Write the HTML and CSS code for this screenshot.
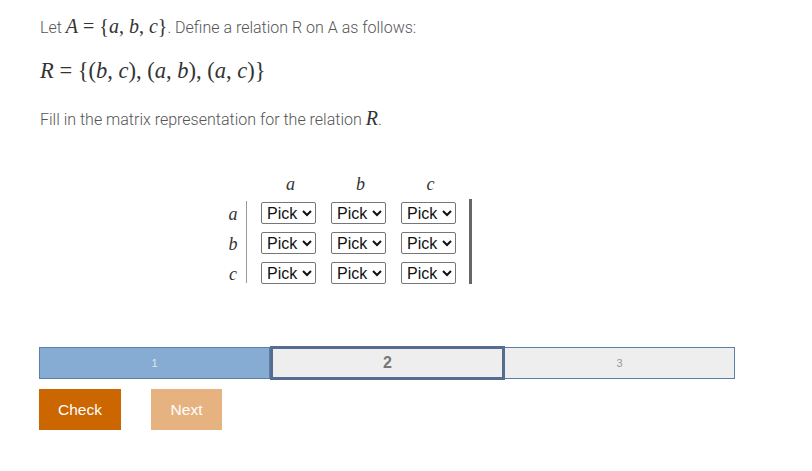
FILE: index.html
```html
<!DOCTYPE html>
<html>
<head>
<meta charset="utf-8">
<link rel="stylesheet" href="styles.css">
</head>
<body>
<div class="page">
  <p class="line l1">Let <span class="m"><i>A</i> = {<i>a</i>, <i>b</i>, <i>c</i>}</span>. Define a relation R on A as follows:</p>
  <p class="line l2"><span class="m big"><i>R</i> = {(<i>b</i>, <i>c</i>), (<i>a</i>, <i>b</i>), (<i>a</i>, <i>c</i>)}</span></p>
  <p class="line l3">Fill in the matrix representation for the relation <span class="m"><i>R</i></span>.</p>

  <div class="matrix">
    <div class="heads">
      <span class="h"><i>a</i></span><span class="h"><i>b</i></span><span class="h"><i>c</i></span>
    </div>
    <div class="body">
      <div class="labels">
        <span><i>a</i></span><span><i>b</i></span><span><i>c</i></span>
      </div>
      <div class="bar left"></div>
      <div class="cells">
        <select><option>Pick</option></select><select><option>Pick</option></select><select><option>Pick</option></select>
        <select><option>Pick</option></select><select><option>Pick</option></select><select><option>Pick</option></select>
        <select><option>Pick</option></select><select><option>Pick</option></select><select><option>Pick</option></select>
      </div>
      <div class="bar right"></div>
    </div>
  </div>

  <div class="progress">
    <div class="seg done">1</div>
    <div class="seg current">2</div>
    <div class="seg todo">3</div>
  </div>

  <div class="buttons">
    <button class="btn check">Check</button>
    <button class="btn next">Next</button>
  </div>
</div>
</body>
</html>
```
FILE: styles.css
```css
html, body { margin: 0; padding: 0; background: #fff; }
.page {
  padding: 16px 77px 0 39px;
  font-family: Roboto, "Liberation Sans", sans-serif;
  color: #555;
}
.line { margin: 0; font-size: 16px; font-weight: 300; line-height: 22px; padding-left: 1px; }
.l2 { margin-top: 22px; }
.l3 { margin-top: 24px; }
.m { font-family: "Liberation Serif", "DejaVu Serif", serif; font-size: 20px; color: #333; font-weight: 400; line-height: 20px; }
.m i { font-style: italic; }
.big { font-size: 22.5px; }

.matrix { margin-top: 43px; margin-left: 181px; font-family: "Liberation Serif", serif; font-size: 18px; color: #333; }
.heads { display: flex; margin-left: 43px; gap: 15px; line-height: 20px; }
.h { width: 55px; text-align: center; }
.body { display: flex; margin-top: 5px; align-items: flex-start; }
.labels { display: flex; flex-direction: column; width: 26px; padding-top: 4px; gap: 8px; }
.labels span { height: 22px; line-height: 22px; text-align: center; }
.bar.left { width: 1px; margin-right: 14px; height: 82px; background: #999; margin-top: 2px; }
.bar.right { width: 3px; margin-left: 13px; height: 85px; background: #666; margin-top: 0; }
.cells { display: grid; grid-template-columns: repeat(3, 55px); column-gap: 15px; row-gap: 8px; padding-top: 3px; }
.cells select {
  box-sizing: border-box;
  width: 55px; height: 22px;
  font-family: "Liberation Sans", Arial, sans-serif; font-size: 16px; color: #111;
  border: 1px solid #767676; border-radius: 2px; background: #fff; padding: 0 0 0 1px;
}

.progress { display: flex; margin-top: 62px; height: 32px; align-items: center; }
.seg { flex: 1; box-sizing: border-box; height: 32px; display: flex; align-items: center; justify-content: center; font-family: "Liberation Sans", Arial, sans-serif; }
.done { background: #87acd3; border: 1px solid #5a80a8; color: #dde8f2; font-size: 11px; flex: 0 0 231px; }
.current { background: #eee; border: 3px solid #566d8f; height: 34px; color: #777; font-weight: bold; font-size: 16px; flex: 0 0 235px; }
.todo { background: #eee; border: 1px solid #5a80a8; border-left: none; color: #999; font-size: 11px; }

.buttons { display: flex; gap: 30px; margin-top: 10px; }
.btn { border: none; font-family: "Liberation Sans", Arial, sans-serif; font-size: 15.5px; color: #fff; height: 41px; padding: 0; }
.check { background: #cc6600; width: 82px; }
.next { background: #e6b380; width: 71px; }
```
